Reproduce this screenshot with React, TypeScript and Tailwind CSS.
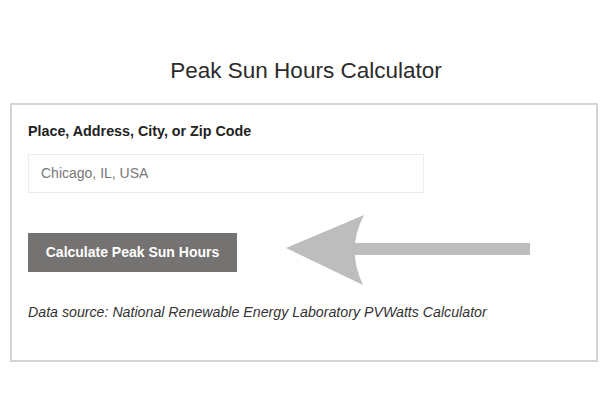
import React from "react";

export default function App() {
  return (
    <div
      className="relative w-[612px] h-[408px] bg-white text-[#333]"
      style={{ fontFamily: '"Liberation Sans", Arial, sans-serif' }}
    >
      <h1 className="pt-[57px] text-center text-[22.5px] leading-[28px] font-normal text-[#2b2b2b]">
        Peak Sun Hours Calculator
      </h1>
      <div className="mt-[18px] ml-[10px] w-[588px] h-[259px] border-2 border-[#d4d4d4] px-[16px] pt-[16px]">
        <div className="text-[14.3px] leading-[20px] font-bold text-[#222]">
          Place, Address, City, or Zip Code
        </div>
        <div className="mt-[13px] w-[396px] h-[39px] border border-[#ececec] pl-[12px] flex items-center text-[14px] text-[#777]">
          Chicago, IL, USA
        </div>
        <button className="mt-[40px] w-[209px] h-[39px] bg-[#757272] text-white text-[14px] font-bold flex items-center justify-center">
          Calculate Peak Sun Hours
        </button>
        <div className="mt-[30px] text-[14.2px] leading-[20px] italic text-[#333]">
          Data source: National Renewable Energy Laboratory PVWatts Calculator
        </div>
      </div>
      <svg
        className="absolute left-0 top-0 pointer-events-none"
        width="612"
        height="408"
        viewBox="0 0 612 408"
      >
        <rect x="350" y="243" width="180" height="12" fill="#bdbdbd" />
        <path d="M286 248 L364 215 Q346 249 363 285 Z" fill="#bdbdbd" />
      </svg>
    </div>
  );
}
